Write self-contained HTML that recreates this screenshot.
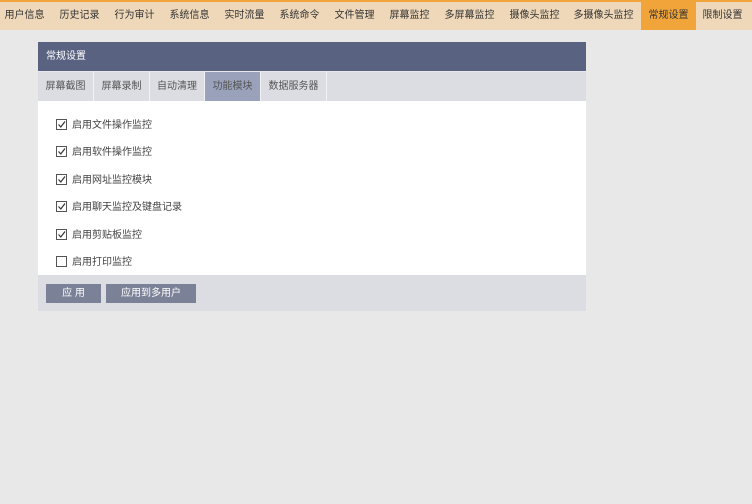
<!DOCTYPE html>
<html><head><meta charset="utf-8"><style>
*{margin:0;padding:0;box-sizing:border-box}
body{width:752px;height:504px;background:#e8e8e8;font-family:"Liberation Sans","Noto Sans CJK SC",sans-serif;font-size:10px;color:#333;position:relative;overflow:hidden}
.top{position:absolute;left:0;top:0;width:752px;height:30px;background:#efd8b9;border-top:2px solid #f0a43a}
.n{position:absolute;top:0;height:28px;line-height:28px;text-align:center;color:#333}
.n.a{background:#f0a43a}
.panel{position:absolute;left:38px;top:42px;width:548px;height:269px;background:#fff}
.hd{height:29px;background:#5a6282;color:#fff;line-height:29px;padding-left:8px}
.tabs{height:30px;background:#dcdde2;position:relative;border-top:1px solid #e8e8ee}
.t{position:absolute;top:0;height:29px;line-height:29px;text-align:center;color:#555;border-right:1px solid #f2f2f4}
.t.a{background:#9aa2bb}
.row{position:absolute;left:18px;height:14px;line-height:14px;color:#444}
.cb{display:inline-block;width:11px;height:11px;border:1px solid #555;vertical-align:-2px;margin-right:5px;position:relative;background:#fff}
.cb svg{position:absolute;left:0;top:0}
.ft{position:absolute;left:0;top:233px;width:548px;height:36px;background:#dcdde2}
.b{position:absolute;top:9px;height:19px;line-height:19px;background:#7b8196;color:#fff;text-align:center}
</style></head><body>
<div class="top">
<div class="n" style="left:0;width:49px">用户信息</div>
<div class="n" style="left:55px;width:49px">历史记录</div>
<div class="n" style="left:110px;width:49px">行为审计</div>
<div class="n" style="left:165px;width:49px">系统信息</div>
<div class="n" style="left:220px;width:49px">实时流量</div>
<div class="n" style="left:275px;width:49px">系统命令</div>
<div class="n" style="left:330px;width:49px">文件管理</div>
<div class="n" style="left:385px;width:49px">屏幕监控</div>
<div class="n" style="left:440px;width:59px">多屏幕监控</div>
<div class="n" style="left:505px;width:59px">摄像头监控</div>
<div class="n" style="left:569px;width:69px">多摄像头监控</div>
<div class="n a" style="left:641px;width:55px">常规设置</div>
<div class="n" style="left:698px;width:49px">限制设置</div>
</div>
<div class="panel">
<div class="hd">常规设置</div>
<div class="tabs">
<div class="t" style="left:0;width:56px">屏幕截图</div>
<div class="t" style="left:56px;width:56px">屏幕录制</div>
<div class="t" style="left:112px;width:55px">自动清理</div>
<div class="t a" style="left:167px;width:56px">功能模块</div>
<div class="t" style="left:223px;width:66px">数据服务器</div>
</div>
<div class="row" style="top:77px"><span class="cb"><svg width="9" height="9"><path d="M1.5 4.5L3.8 7L8 1.5" stroke="#333" stroke-width="1.2" fill="none"/></svg></span>启用文件操作监控</div>
<div class="row" style="top:104px"><span class="cb"><svg width="9" height="9"><path d="M1.5 4.5L3.8 7L8 1.5" stroke="#333" stroke-width="1.2" fill="none"/></svg></span>启用软件操作监控</div>
<div class="row" style="top:132px"><span class="cb"><svg width="9" height="9"><path d="M1.5 4.5L3.8 7L8 1.5" stroke="#333" stroke-width="1.2" fill="none"/></svg></span>启用网址监控模块</div>
<div class="row" style="top:159px"><span class="cb"><svg width="9" height="9"><path d="M1.5 4.5L3.8 7L8 1.5" stroke="#333" stroke-width="1.2" fill="none"/></svg></span>启用聊天监控及键盘记录</div>
<div class="row" style="top:187px"><span class="cb"><svg width="9" height="9"><path d="M1.5 4.5L3.8 7L8 1.5" stroke="#333" stroke-width="1.2" fill="none"/></svg></span>启用剪贴板监控</div>
<div class="row" style="top:214px"><span class="cb"></span>启用打印监控</div>
<div class="ft">
<div class="b" style="left:8px;width:55px">应 用</div>
<div class="b" style="left:68px;width:90px">应用到多用户</div>
</div>
</div>
</body></html>
